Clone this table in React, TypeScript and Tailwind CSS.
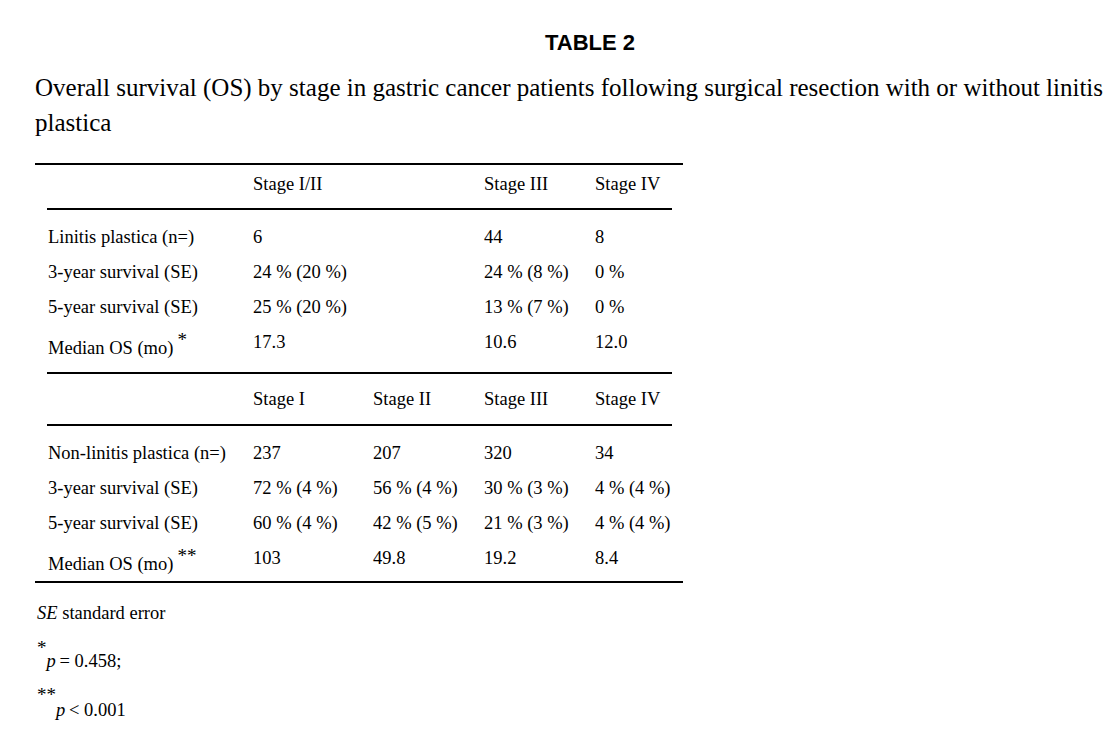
import React from "react";

type Row = { label: React.ReactNode; cells: string[] };

const serif = "font-['Liberation_Serif','Times_New_Roman',serif]";

const linitis: Row[] = [
  { label: "Linitis plastica (n=)", cells: ["6", "", "44", "8"] },
  { label: "3-year survival (SE)", cells: ["24 % (20 %)", "", "24 % (8 %)", "0 %"] },
  { label: "5-year survival (SE)", cells: ["25 % (20 %)", "", "13 % (7 %)", "0 %"] },
];

const nonLinitis: Row[] = [
  { label: "Non-linitis plastica (n=)", cells: ["237", "207", "320", "34"] },
  { label: "3-year survival (SE)", cells: ["72 % (4 %)", "56 % (4 %)", "30 % (3 %)", "4 % (4 %)"] },
  { label: "5-year survival (SE)", cells: ["60 % (4 %)", "42 % (5 %)", "21 % (3 %)", "4 % (4 %)"] },
];

const grid = "grid grid-cols-[205px_120px_111px_111px_1fr] pl-[13px]";

function BodyRow({ row }: { row: Row }) {
  return (
    <div className={`${grid} h-[35px] items-center whitespace-nowrap`}>
      <div>{row.label}</div>
      {row.cells.map((c, i) => (
        <div key={i}>{c}</div>
      ))}
    </div>
  );
}

function MedianRow({ stars, cells }: { stars: string; cells: string[] }) {
  return (
    <div className={`${grid} h-[35px] items-start pt-[8px] whitespace-nowrap`}>
      <div className="pt-[6px]">
        Median OS (mo)
        <span className="relative -top-[8px] ml-[4px] text-[19px] leading-none">{stars}</span>
      </div>
      {cells.map((c, i) => (
        <div key={i}>{c}</div>
      ))}
    </div>
  );
}

function InnerRule() {
  return <div className="ml-[12px] mr-[11px] h-[2px] bg-black" />;
}

export default function App() {
  return (
    <div className={`w-[1108px] h-[732px] overflow-hidden bg-white text-black ${serif}`}>
      <div className="pt-[31px] pl-[72px] text-center text-[22px] leading-[24px] font-bold font-['Liberation_Sans',Arial,sans-serif]">
        TABLE 2
      </div>
      <p className="mt-[15px] pl-[35px] text-[25px] leading-[35px] whitespace-nowrap">
        Overall survival (OS) by stage in gastric cancer patients following surgical resection with or without linitis
        <br />
        plastica
      </p>

      <div className="ml-[35px] mt-[23px] w-[648px] text-[18.5px] leading-[20px]">
        <div className="h-[2px] bg-black" />
        <div className={`${grid} pt-[9px] h-[43px]`}>
          <div />
          <div>Stage I/II</div>
          <div />
          <div>Stage III</div>
          <div>Stage IV</div>
        </div>
        <InnerRule />
        <div className="pt-[9px] pb-[13px]">
          {linitis.map((r, i) => (
            <BodyRow key={i} row={r} />
          ))}
          <MedianRow stars="*" cells={["17.3", "", "10.6", "12.0"]} />
        </div>
        <InnerRule />
        <div className={`${grid} h-[50px] items-center`}>
          <div />
          <div>Stage I</div>
          <div>Stage II</div>
          <div>Stage III</div>
          <div>Stage IV</div>
        </div>
        <InnerRule />
        <div className="pt-[9px] pb-[6px]">
          {nonLinitis.map((r, i) => (
            <BodyRow key={i} row={r} />
          ))}
          <MedianRow stars="**" cells={["103", "49.8", "19.2", "8.4"]} />
        </div>
        <div className="h-[2px] bg-black" />
      </div>

      <div className="mt-[20px] pl-[37px] text-[18.5px] leading-[20px]">
        <p>
          <i>SE</i> standard error
        </p>
        <p className="mt-[28px]">
          <span className="relative -top-[13px] text-[19px] leading-none">*</span>
          <i>p</i>
          {"\u2009"}= 0.458;
        </p>
        <p className="mt-[29px]">
          <span className="relative -top-[15px] text-[19px] leading-none">**</span>
          <i>p</i>
          {"\u2009"}&lt; 0.001
        </p>
      </div>
    </div>
  );
}
